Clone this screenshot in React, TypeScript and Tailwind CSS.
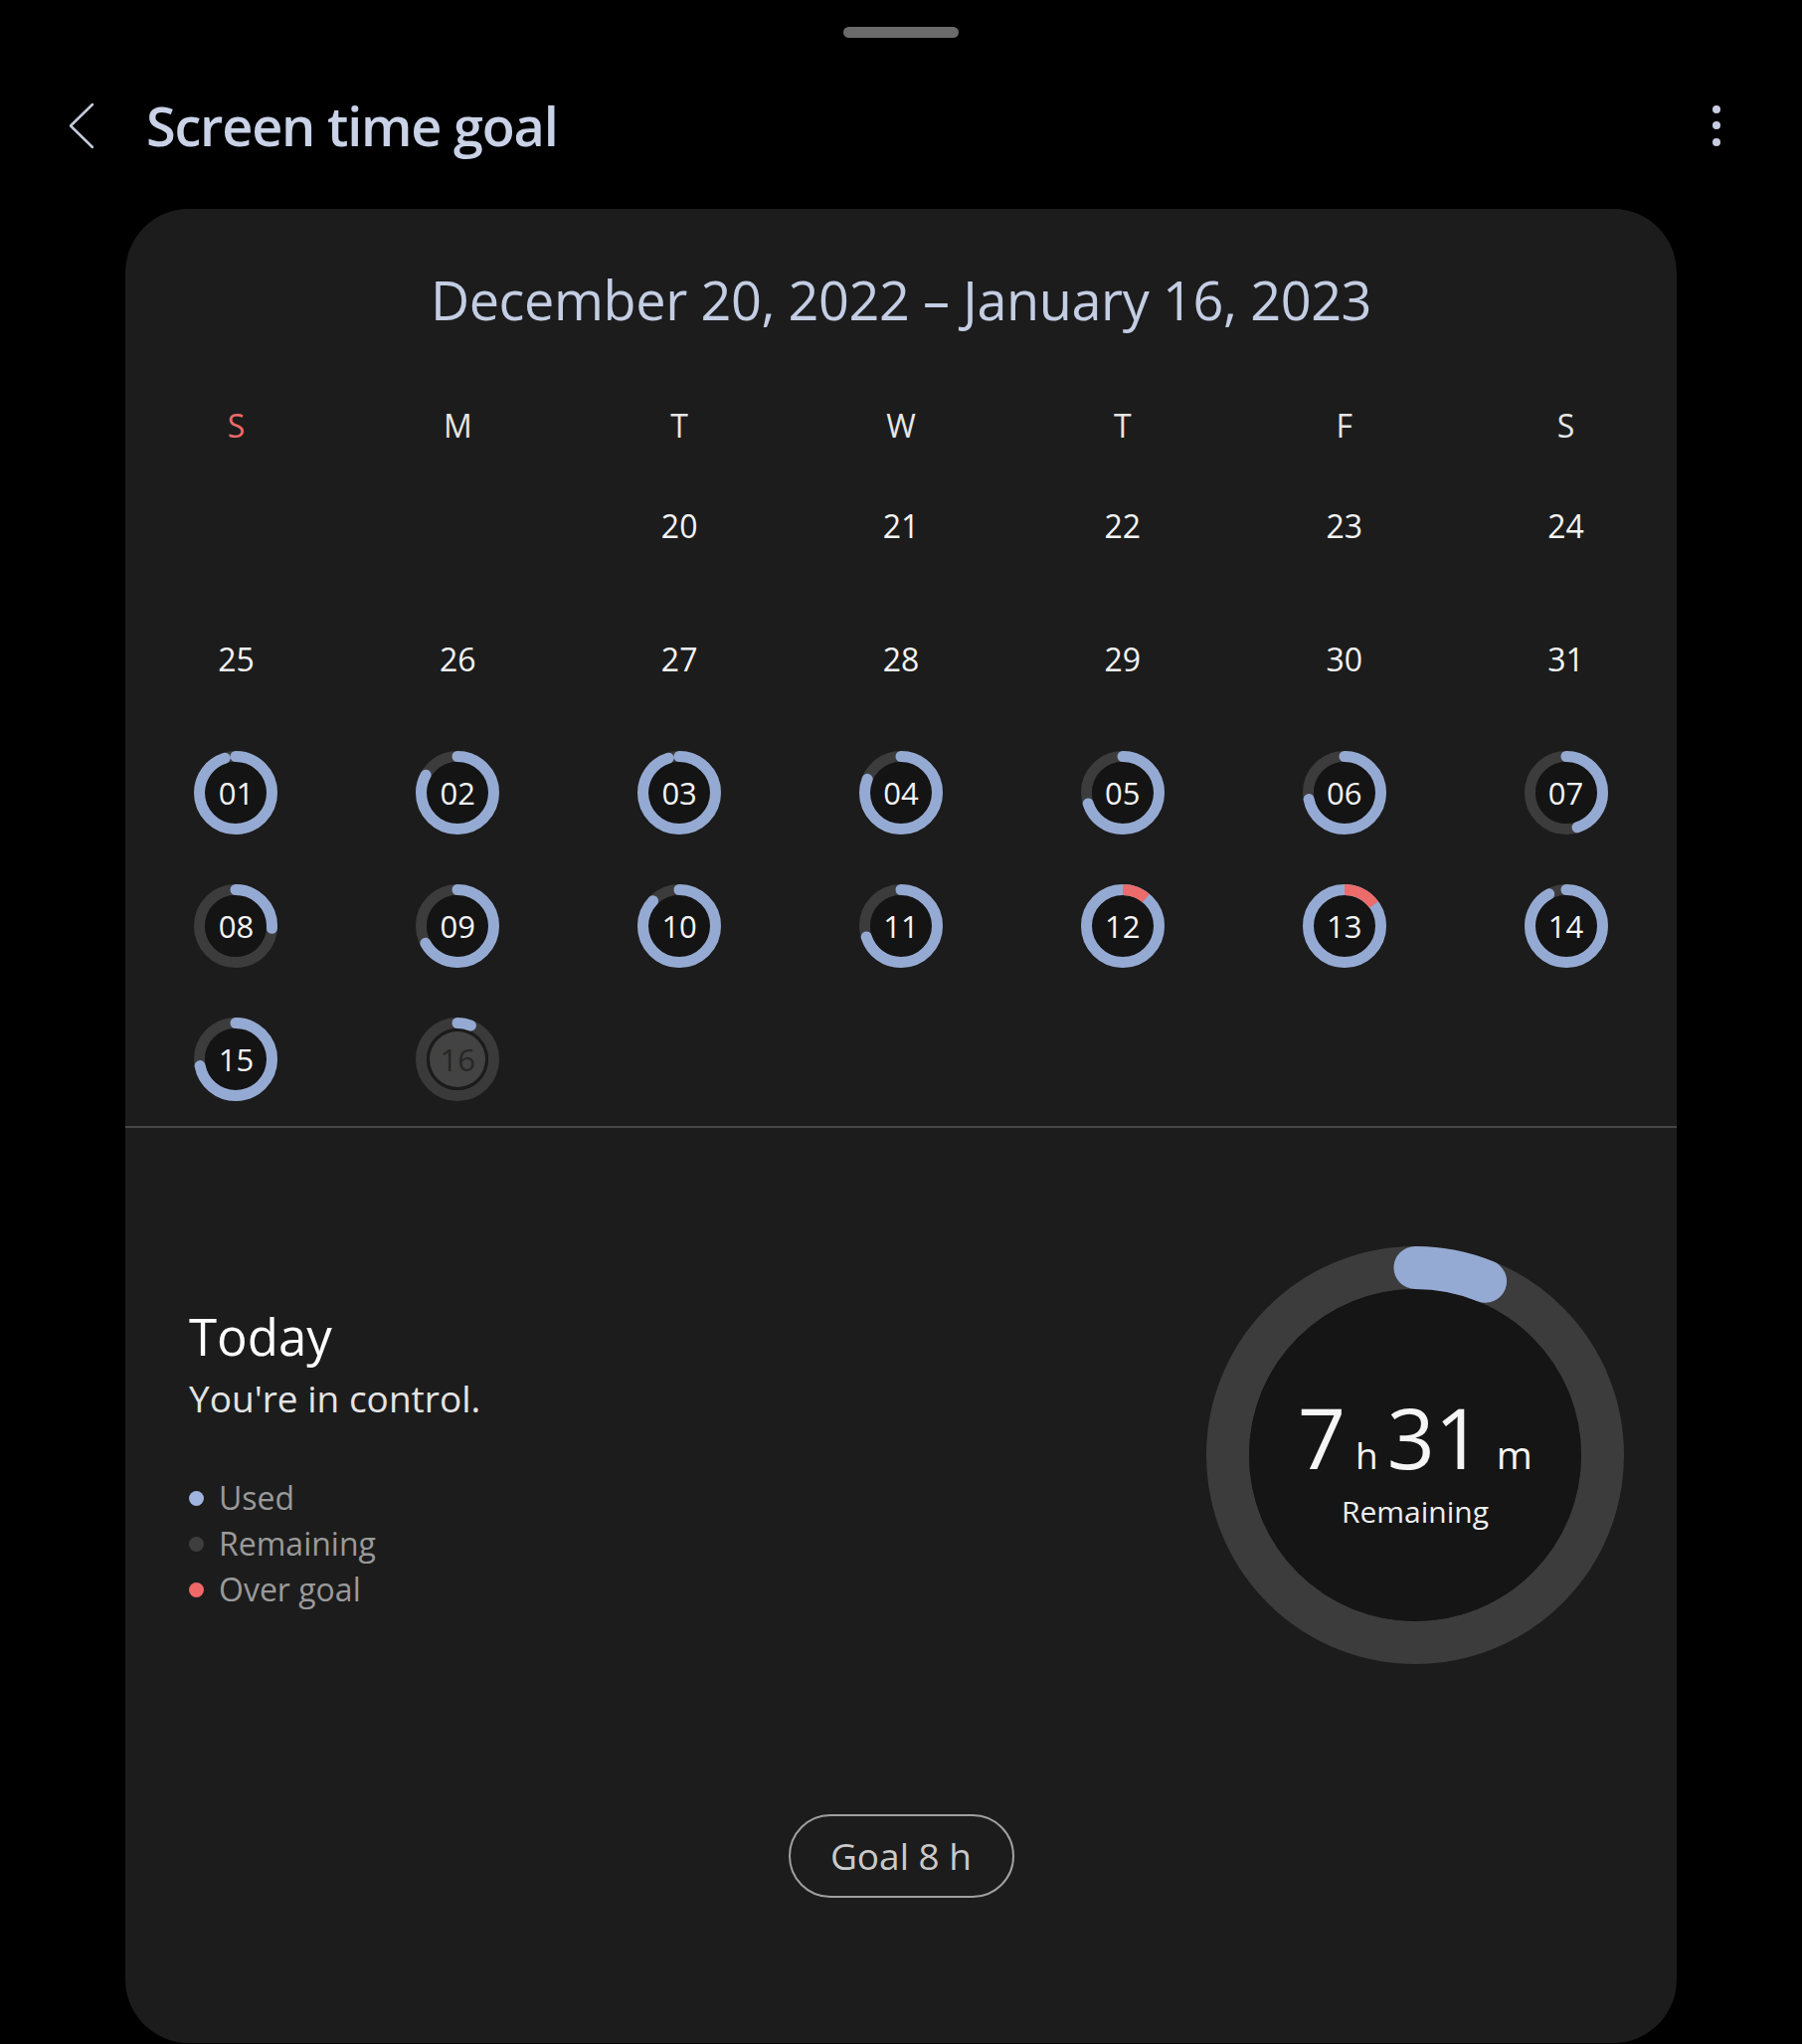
import React from "react";

type Day = { d: string; f?: number; over?: number; today?: boolean; ring?: boolean };

const BLUE = "#95aad3";
const TRACK = "#3c3c3c";

function Ring({ d, f = 0, over = 0, today = false }: Day) {
  const r = 36.5;
  const C = 2 * Math.PI * r;
  return (
    <div className="relative h-[86px] w-[86px]">
      <svg width="86" height="86" viewBox="0 0 86 86" className="absolute inset-0">
        <circle cx="43" cy="43" r={r} fill="none" stroke={today ? "#3a3a3a" : TRACK} strokeWidth="11" />
        {today ? (
          <>
            <circle cx="43" cy="43" r="31" fill="#1b1b1b" />
            <circle cx="43" cy="43" r="28" fill="#434343" />
          </>
        ) : (
          <circle cx="43" cy="43" r="31" fill="#141414" />
        )}
        {f >= 1 ? (
          <circle cx="43" cy="43" r={r} fill="none" stroke={BLUE} strokeWidth="11" />
        ) : f > 0 ? (
          <circle
            cx="43"
            cy="43"
            r={r}
            fill="none"
            stroke={BLUE}
            strokeWidth="11"
            strokeLinecap="round"
            strokeDasharray={`${f * C} ${C}`}
            transform="rotate(-90 43 43)"
          />
        ) : null}
        {over > 0 && (
          <circle
            cx="43"
            cy="43"
            r={r}
            fill="none"
            stroke="#ec6b6b"
            strokeWidth="11"
            strokeDasharray={`${over * C} ${C}`}
            transform="rotate(-90 43 43)"
          />
        )}
      </svg>
      <span
        className={`absolute inset-0 flex items-center justify-center text-[31px] leading-none ${
          today ? "text-[#262626]" : "text-[#f4f4f4]"
        }`}
      >
        {d}
      </span>
    </div>
  );
}

const rows: (Day | null)[][] = [
  [null, null, { d: "20" }, { d: "21" }, { d: "22" }, { d: "23" }, { d: "24" }],
  [{ d: "25" }, { d: "26" }, { d: "27" }, { d: "28" }, { d: "29" }, { d: "30" }, { d: "31" }],
  [
    { d: "01", ring: true, f: 0.95 },
    { d: "02", ring: true, f: 0.83 },
    { d: "03", ring: true, f: 0.95 },
    { d: "04", ring: true, f: 0.81 },
    { d: "05", ring: true, f: 0.7 },
    { d: "06", ring: true, f: 0.72 },
    { d: "07", ring: true, f: 0.45 },
  ],
  [
    { d: "08", ring: true, f: 0.26 },
    { d: "09", ring: true, f: 0.67 },
    { d: "10", ring: true, f: 0.87 },
    { d: "11", ring: true, f: 0.7 },
    { d: "12", ring: true, f: 1, over: 0.11 },
    { d: "13", ring: true, f: 1, over: 0.15 },
    { d: "14", ring: true, f: 0.92 },
  ],
  [{ d: "15", ring: true, f: 0.72 }, { d: "16", ring: true, f: 0.06, today: true }, null, null, null, null, null],
];

const weekdays = ["S", "M", "T", "W", "T", "F", "S"];

function BigRing() {
  const r = 188.5;
  const C = 2 * Math.PI * r;
  const f = 22 / 360;
  return (
    <div className="relative h-[420px] w-[420px]">
      <svg width="420" height="420" viewBox="0 0 420 420" className="absolute inset-0">
        <circle cx="210" cy="210" r={r} fill="none" stroke={TRACK} strokeWidth="43" />
        <circle cx="210" cy="210" r="167" fill="#151515" />
        <circle
          cx="210"
          cy="210"
          r={r}
          fill="none"
          stroke={BLUE}
          strokeWidth="43"
          strokeLinecap="round"
          strokeDasharray={`${f * C} ${C}`}
          transform="rotate(-90 210 210)"
        />
      </svg>
      <div className="absolute inset-0 flex flex-col items-center pt-[150px] text-[#f5f5f5]">
        <div className="flex items-baseline leading-[84px]">
          <span className="text-[84px] leading-[84px]">7</span>
          <span className="ml-[10px] text-[37px] leading-none">h</span>
          <span className="ml-[9px] text-[84px] leading-[84px]">31</span>
          <span className="ml-[14px] text-[39px] leading-none">m</span>
        </div>
        <div className="mt-[15px] text-[30px] leading-[36px] text-[#eeeeee]">Remaining</div>
      </div>
    </div>
  );
}

export default function App() {
  return (
    <div className="min-h-[2055px] bg-black font-['Open_Sans',sans-serif] text-white">
      <div className="pt-[27px]">
        <div className="mx-auto h-[11px] w-[116px] rounded-full bg-[#6b6b6b]" />
        <div className="mt-[56px] flex h-[64px] items-center">
          <svg className="ml-[68px]" width="27" height="47" viewBox="0 0 27 47" fill="none">
            <path d="M25 2 L3 23.5 L25 45" stroke="#c5ccda" strokeWidth="2.5" strokeLinecap="round" strokeLinejoin="round" />
          </svg>
          <h1 className="ml-[52px] text-[54px] font-semibold leading-[64px] tracking-[-1.2px] text-[#c9d2e6]">
            Screen time goal
          </h1>
          <div className="ml-auto mr-[82px] flex flex-col gap-[8.5px]">
            <div className="h-[8px] w-[8px] rounded-full bg-[#c7cde0]" />
            <div className="h-[8px] w-[8px] rounded-full bg-[#c7cde0]" />
            <div className="h-[8px] w-[8px] rounded-full bg-[#c7cde0]" />
          </div>
        </div>
      </div>

      <div className="mx-[126px] mt-[52px] rounded-[64px] bg-[#1c1c1c] pb-[146px] pt-[63px]">
        <div className="text-center text-[54px] leading-[56px] tracking-[-0.4px] text-[#c3cde3]">
          December 20, 2022 – January 16, 2023
        </div>

        <div className="mt-[69px] grid h-[60px] grid-cols-7">
          {weekdays.map((w, i) => (
            <div
              key={i}
              className={`flex items-center justify-center text-[32px] ${i === 0 ? "text-[#ee6a6a]" : "text-[#e6e6e6]"}`}
            >
              {w}
            </div>
          ))}
        </div>

        <div className="mt-[4px] grid grid-cols-7">
          {rows.flat().map((c, i) => (
            <div key={i} className="flex h-[134px] items-center justify-center">
              {c ? (
                c.ring ? (
                  <Ring {...c} />
                ) : (
                  <span className="text-[32px] leading-none text-[#f4f4f4]">{c.d}</span>
                )
              ) : null}
            </div>
          ))}
        </div>

        <div className="h-[2px] bg-[#474747]" />

        <div className="flex pl-[64px] pr-[53px] pt-[119px]">
          <div className="mt-[60px]">
            <div className="text-[51px] leading-[60px] text-white">Today</div>
            <div className="mt-[11px] text-[37px] leading-[44px] text-[#e4e4e4]">You're in control.</div>
            <div className="mt-[55px] flex flex-col">
              {[
                { c: "bg-[#9fb4de]", t: "Used" },
                { c: "bg-[#3e3e3e]", t: "Remaining" },
                { c: "bg-[#f06868]", t: "Over goal" },
              ].map((l) => (
                <div key={l.t} className="flex h-[46px] items-center text-[32px] text-[#9a9a9a]">
                  <span className={`h-[15px] w-[15px] rounded-full ${l.c}`} />
                  <span className="ml-[15px]">{l.t}</span>
                </div>
              ))}
            </div>
          </div>
          <div className="ml-auto">
            <BigRing />
          </div>
        </div>

        <div className="mx-auto mt-[151px] flex h-[84px] w-[227px] items-center justify-center rounded-full border-[2.5px] border-[#a0a0a0] text-[37px] text-[#cacaca]">
          Goal 8 h
        </div>
      </div>
    </div>
  );
}
